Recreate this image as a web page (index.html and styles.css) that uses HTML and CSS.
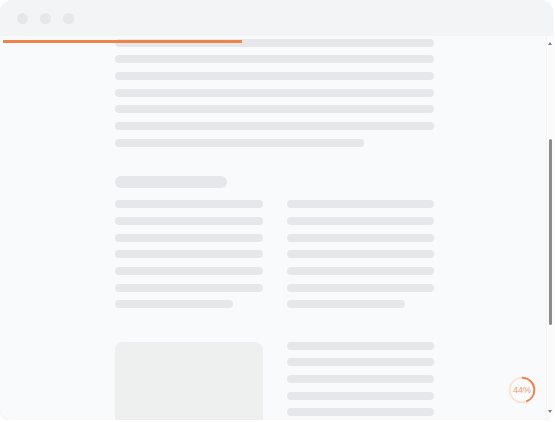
FILE: index.html
```html
<!DOCTYPE html>
<html>
<head>
<meta charset="utf-8">
<link rel="stylesheet" href="styles.css">
</head>
<body>
<div class="window">
  <div class="titlebar">
    <span class="dot"></span><span class="dot"></span><span class="dot"></span>
  </div>
  <div class="main">
    <div class="viewport">
      <div class="progress"><div class="progress-fill"></div></div>
      <div class="article">
        <div class="para">
          <div class="line"></div>
          <div class="line"></div>
          <div class="line"></div>
          <div class="line"></div>
          <div class="line"></div>
          <div class="line"></div>
          <div class="line short78"></div>
        </div>
        <div class="heading"></div>
        <div class="cols">
          <div class="para">
            <div class="line"></div>
            <div class="line"></div>
            <div class="line"></div>
            <div class="line"></div>
            <div class="line"></div>
            <div class="line"></div>
            <div class="line short80"></div>
          </div>
          <div class="para">
            <div class="line"></div>
            <div class="line"></div>
            <div class="line"></div>
            <div class="line"></div>
            <div class="line"></div>
            <div class="line"></div>
            <div class="line short80"></div>
          </div>
        </div>
        <div class="cols media">
          <div class="figure"></div>
          <div class="para">
            <div class="line"></div>
            <div class="line"></div>
            <div class="line"></div>
            <div class="line"></div>
            <div class="line"></div>
            <div class="line"></div>
          </div>
        </div>
      </div>
    </div>
    <div class="scrollbar">
      <div class="arrow up"></div>
      <div class="track"><div class="thumb"></div></div>
      <div class="arrow down"></div>
    </div>
  </div>
  <div class="ring">
    <svg width="28" height="28" viewBox="0 0 28 28">
      <circle cx="14" cy="14" r="12.3" fill="#fbfbfb" stroke="#fbe3d6" stroke-width="2"/>
      <circle cx="14" cy="14" r="12.3" fill="none" stroke="#f0834d" stroke-width="2" stroke-dasharray="34 100" transform="rotate(-90 14 14)"/>
    </svg>
    <span class="ring-label">44%</span>
  </div>
</div>
</body>
</html>
```
FILE: styles.css
```css
* { box-sizing: border-box; }
html, body { margin: 0; padding: 0; background: #ffffff; }
body { font-family: "Liberation Sans", Arial, sans-serif; }

.window {
  position: relative;
  width: 553px;
  height: 420px;
  border-radius: 12px;
  overflow: hidden;
  background: #f9fafb;
  box-shadow: 0 1px 2px rgba(0,0,0,0.08);
  display: flex;
  flex-direction: column;
}

.titlebar {
  height: 36px;
  flex: none;
  background: #f3f4f6;
  display: flex;
  align-items: center;
  gap: 12px;
  padding-left: 17px;
}
.dot {
  width: 11px;
  height: 11px;
  border-radius: 50%;
  background: #e5e7eb;
}

.main {
  flex: 1;
  display: flex;
  min-height: 0;
}

.viewport {
  position: relative;
  flex: 1;
  margin-left: 3px;
  overflow: hidden;
  padding-top: 2.7px;
}

.progress {
  position: absolute;
  left: 0;
  top: 4px;
  width: 100%;
  height: 3px;
  z-index: 2;
}
.progress-fill {
  width: 44%;
  height: 100%;
  background: #f0834d;
}

.article {
  width: 319px;
  margin: 0 auto;
}

.para {
  display: flex;
  flex-direction: column;
  gap: 8.67px;
}
.line {
  height: 8px;
  border-radius: 4px;
  background: #e5e7eb;
}
.short78 { width: 78%; }
.short80 { width: 80%; }

.heading {
  margin-top: 29px;
  width: 112px;
  height: 12.3px;
  border-radius: 6px;
  background: #e5e7eb;
}

.cols {
  margin-top: 12.3px;
  display: grid;
  grid-template-columns: 1fr 1fr;
  gap: 24px;
}
.cols.media {
  margin-top: 33.4px;
}
.figure {
  height: 120px;
  border-radius: 8px;
  background: #eeefef;
}

.scrollbar {
  width: 7px;
  flex: none;
  background: #fbfbfc;
  border-left: 1px solid #f1f2f4;
  display: flex;
  flex-direction: column;
  align-items: center;
  padding: 6px 0 7px;
}
.arrow {
  width: 0;
  height: 0;
  border-left: 2px solid transparent;
  border-right: 2px solid transparent;
}
.arrow.up { border-bottom: 3px solid #7a7a7a; }
.arrow.down { border-top: 3px solid #7a7a7a; }
.track {
  flex: 1;
  width: 100%;
  display: flex;
  justify-content: center;
}
.thumb {
  margin-top: 94px;
  width: 3px;
  height: 186px;
  border-radius: 1.5px;
  background: #8c8c8c;
}

.ring {
  position: absolute;
  left: 508px;
  top: 376px;
  width: 28px;
  height: 28px;
  display: flex;
  align-items: center;
  justify-content: center;
}
.ring svg { position: absolute; left: 0; top: 0; }
.ring-label {
  position: relative;
  font-size: 9px;
  color: #f09a72;
}
```
